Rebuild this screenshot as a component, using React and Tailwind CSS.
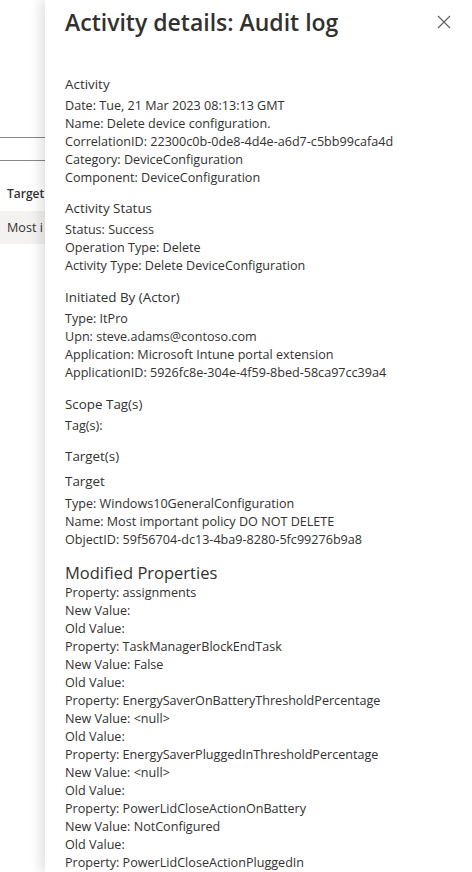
import React from "react";

const F = { fontFamily: '"Open Sans", "Noto Sans", sans-serif' };

function Line({ children }) {
  return <div className="text-[12.6px] leading-[18px] whitespace-nowrap">{children}</div>;
}

function Heading({ children, className = "" }) {
  return (
    <div className={"text-[13.4px] leading-[20px] whitespace-nowrap " + className}>{children}</div>
  );
}

function Section({ title, lines, className = "" }) {
  return (
    <div className={className}>
      <Heading className="mb-[3px]">{title}</Heading>
      {lines.map((l, i) => (
        <Line key={i}>{l}</Line>
      ))}
    </div>
  );
}

const modified = [
  "Property: assignments",
  "New Value:",
  "Old Value:",
  "Property: TaskManagerBlockEndTask",
  "New Value: False",
  "Old Value:",
  "Property: EnergySaverOnBatteryThresholdPercentage",
  "New Value: <null>",
  "Old Value:",
  "Property: EnergySaverPluggedInThresholdPercentage",
  "New Value: <null>",
  "Old Value:",
  "Property: PowerLidCloseActionOnBattery",
  "New Value: NotConfigured",
  "Old Value:",
  "Property: PowerLidCloseActionPluggedIn",
];

export default function App() {
  return (
    <div
      className="w-[472px] h-[872px] overflow-hidden bg-white flex text-[#323130]"
      style={F}
    >
      {/* background page strip */}
      <div className="w-[45px] shrink-0 flex flex-col">
        <div className="h-[137px]" />
        <div className="h-px bg-[#8a8886]" />
        <div className="h-[22px]" />
        <div className="h-px bg-[#8a8886]" />
        <div className="h-[24px]" />
        <div className="h-[18px] pl-[7px] text-[12px] leading-[18px] font-semibold whitespace-nowrap overflow-hidden">
          Target
        </div>
        <div className="h-[8px]" />
        <div className="h-[33px] bg-[#f3f2f1] pl-[7px] text-[12.6px] leading-[33px] whitespace-nowrap overflow-hidden">
          Most i
        </div>
      </div>

      {/* flyout panel */}
      <div className="flex-1 bg-white shadow-[-6px_0_10px_rgba(0,0,0,0.10)] pl-[20px] pr-[16px] relative z-10">
        <div className="flex items-start justify-between">
          <h1 className="text-[23px] leading-[32px] font-semibold mt-[6px] whitespace-nowrap">
            Activity details: Audit log
          </h1>
          <button className="mt-[14px] mr-[4px] w-[16px] h-[16px] flex items-center justify-center text-[#605e5c]">
            <svg width="14" height="14" viewBox="0 0 14 14" fill="none" stroke="currentColor" strokeWidth="1.1">
              <path d="M1 1 L13 13 M13 1 L1 13" />
            </svg>
          </button>
        </div>

        <Section
          className="mt-[36px]"
          title="Activity"
          lines={[
            "Date: Tue, 21 Mar 2023 08:13:13 GMT",
            "Name: Delete device configuration.",
            "CorrelationID: 22300c0b-0de8-4d4e-a6d7-c5bb99cafa4d",
            "Category: DeviceConfiguration",
            "Component: DeviceConfiguration",
          ]}
        />
        <Section
          className="mt-[11px]"
          title="Activity Status"
          lines={[
            "Status: Success",
            "Operation Type: Delete",
            "Activity Type: Delete DeviceConfiguration",
          ]}
        />
        <Section
          className="mt-[12px]"
          title="Initiated By (Actor)"
          lines={[
            "Type: ItPro",
            "Upn: steve.adams@contoso.com",
            "Application: Microsoft Intune portal extension",
            "ApplicationID: 5926fc8e-304e-4f59-8bed-58ca97cc39a4",
          ]}
        />
        <Section className="mt-[12px]" title="Scope Tag(s)" lines={["Tag(s):"]} />

        <div className="mt-[11px]">
          <Heading className="mb-[5px]">Target(s)</Heading>
          <Heading className="mb-[4px]">Target</Heading>
          <Line>Type: Windows10GeneralConfiguration</Line>
          <Line>Name: Most important policy DO NOT DELETE</Line>
          <Line>ObjectID: 59f56704-dc13-4ba9-8280-5fc99276b9a8</Line>
        </div>

        <div className="mt-[13px]">
          <div className="text-[16.5px] leading-[22px] whitespace-nowrap">Modified Properties</div>
          {modified.map((l, i) => (
            <Line key={i}>{l}</Line>
          ))}
        </div>
      </div>
    </div>
  );
}
